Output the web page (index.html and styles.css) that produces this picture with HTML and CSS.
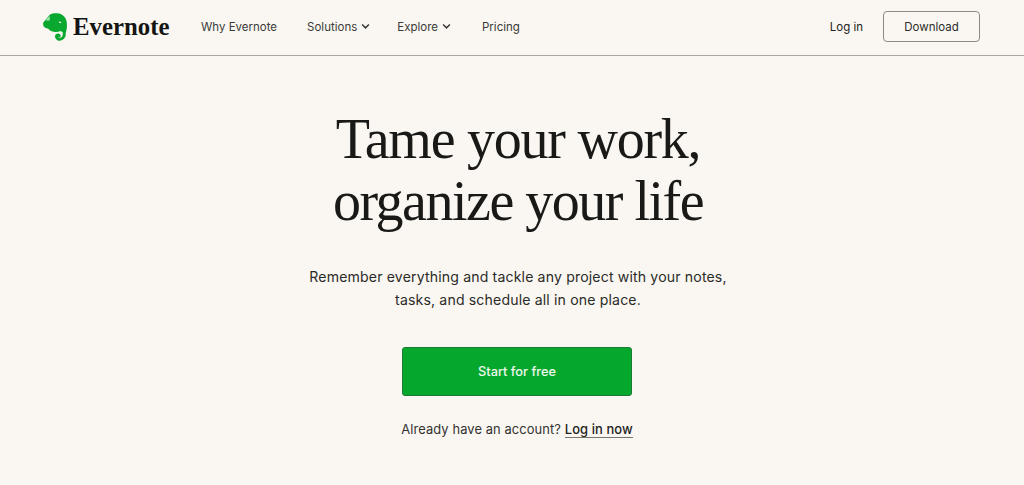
FILE: index.html
```
<!DOCTYPE html>
<html lang="en">
<head>
<meta charset="utf-8">
<title>Evernote</title>
<link rel="stylesheet" href="styles.css">
</head>
<body>
<header class="topbar">
  <a class="brand" href="#">
    <svg class="brand-mark" viewBox="0 0 24 28" width="24" height="28" aria-hidden="true">
      <path fill="#0ba82f" d="M7 1.500C9 .5 11.500 0 14 .3c5.500.5 9 3.700 9.700 8.700.5 3.500.3 7-.7 10-.4 1-1.400 1.200-2.500.6l-3-1.600c-1.500.8-3.500 1.200-5.500 1-3.500-.3-5.500-1.500-7-3.500C2.500 15.500.7 14 .3 12.500c-.3-1-.2-2.200 0-3z"/>
      <path fill="none" stroke="#0ba82f" stroke-width="3" stroke-linecap="round" d="M20.800 15.500c.3 3 1 5.500 0 8-1.100 2.500-4 3.200-5.800 2.300-1.800-.9-2-3-.6-3.700.9-.4 1.700 0 1.800.7"/>
      <path fill="#a6e6b4" d="M6.700 3v4.500H2.500z"/>
      <path fill="#faf7f2" d="M16 8.600c1.200 0 2.300.6 2.500 1.500-1.100.4-2.300-.2-2.800-1z"/>
    </svg>
    <span class="brand-name">Evernote</span>
  </a>
  <nav class="main-nav">
    <a class="nav-link" href="#">Why Evernote</a>
    <a class="nav-link nav-tight" href="#">Solutions<svg class="chev" viewBox="0 0 8 6" width="9" height="7"><path d="M1 1.200 4 4.200 7 1.200" fill="none" stroke="#3a3a38" stroke-width="1.300"/></svg></a>
    <a class="nav-link nav-loose" href="#">Explore<svg class="chev" viewBox="0 0 8 6" width="9" height="7"><path d="M1 1.200 4 4.200 7 1.200" fill="none" stroke="#3a3a38" stroke-width="1.300"/></svg></a>
    <a class="nav-link" href="#">Pricing</a>
  </nav>
  <div class="actions">
    <a class="login" href="#">Log in</a>
    <a class="download" href="#">Download</a>
  </div>
</header>
<main class="hero">
  <h1 class="headline">Tame your work,<br><span class="headline-second">organize your life</span></h1>
  <p class="lede">Remember everything and tackle any project with your notes,<br>tasks, and schedule all in one place.</p>
  <a class="cta" href="#">Start for free</a>
  <p class="already">Already have an account? <a class="login-now" href="#">Log in now</a></p>
</main>
</body>
</html>
```
FILE: styles.css
```
* { box-sizing: border-box; }
html, body { margin: 0; height: 100%; }
body {
  background: #faf7f2;
  color: #1c1c1a;
  font-family: Inter, "Liberation Sans", sans-serif;
  overflow: hidden;
}
a { color: inherit; text-decoration: none; }
.topbar {
  display: flex;
  align-items: center;
  height: 56px;
  padding: 0 44px 2px 43px;
  border-bottom: 1px solid #a9a7a2;
}
.brand { display: flex; align-items: center; gap: 6px; width: 158px; }
.brand-mark { flex: none; }
.brand-name {
  font-family: "Liberation Serif", serif;
  font-weight: 700;
  font-size: 24.800px;
  color: #151513;
}
.main-nav { display: flex; align-items: center; gap: 30px; }
.nav-link {
  display: flex;
  align-items: center;
  gap: 4px;
  font-size: 11.500px;
  color: #3a3a38;
}
.nav-tight { margin-right: -3px; }
.nav-loose { margin-right: 1px; }
.actions { display: flex; align-items: center; gap: 20px; margin-left: auto; }
.login { font-size: 11.500px; color: #222220; }
.download {
  display: flex;
  align-items: center;
  justify-content: center;
  width: 97px;
  height: 31px;
  border: 1px solid #8c8a85;
  border-radius: 4px;
  font-size: 11.500px;
  color: #2c2c2a;
}
.hero { display: flex; flex-direction: column; align-items: center; padding-left: 12px; }
.headline {
  margin: 52px 0 0;
  font-family: "Liberation Serif", serif;
  font-weight: 400;
  font-size: 56px;
  line-height: 62px;
  letter-spacing: -1.250px;
  text-align: center;
  color: #191917;
}
.headline-second { letter-spacing: -1.500px; }
.lede {
  margin: 33px 0 0;
  font-size: 14.100px;
  line-height: 23px;
  letter-spacing: .15px;
  text-align: center;
  color: #2b2b29;
}
.cta {
  display: flex;
  align-items: center;
  justify-content: center;
  width: 230px;
  height: 49px;
  margin: 36px 0 0 -2px;
  background: #05a82d;
  border: 1px solid #1d7a35;
  border-radius: 3px;
  color: #eef8ee;
  font-size: 12.800px;
  font-weight: 450;
}
.already {
  margin: 26px 0 0 -2px;
  font-size: 12.900px;
  letter-spacing: .1px;
  color: #333331;
}
.login-now {
  font-weight: 500;
  color: #222220;
  border-bottom: 1px solid #77756f;
}
```
